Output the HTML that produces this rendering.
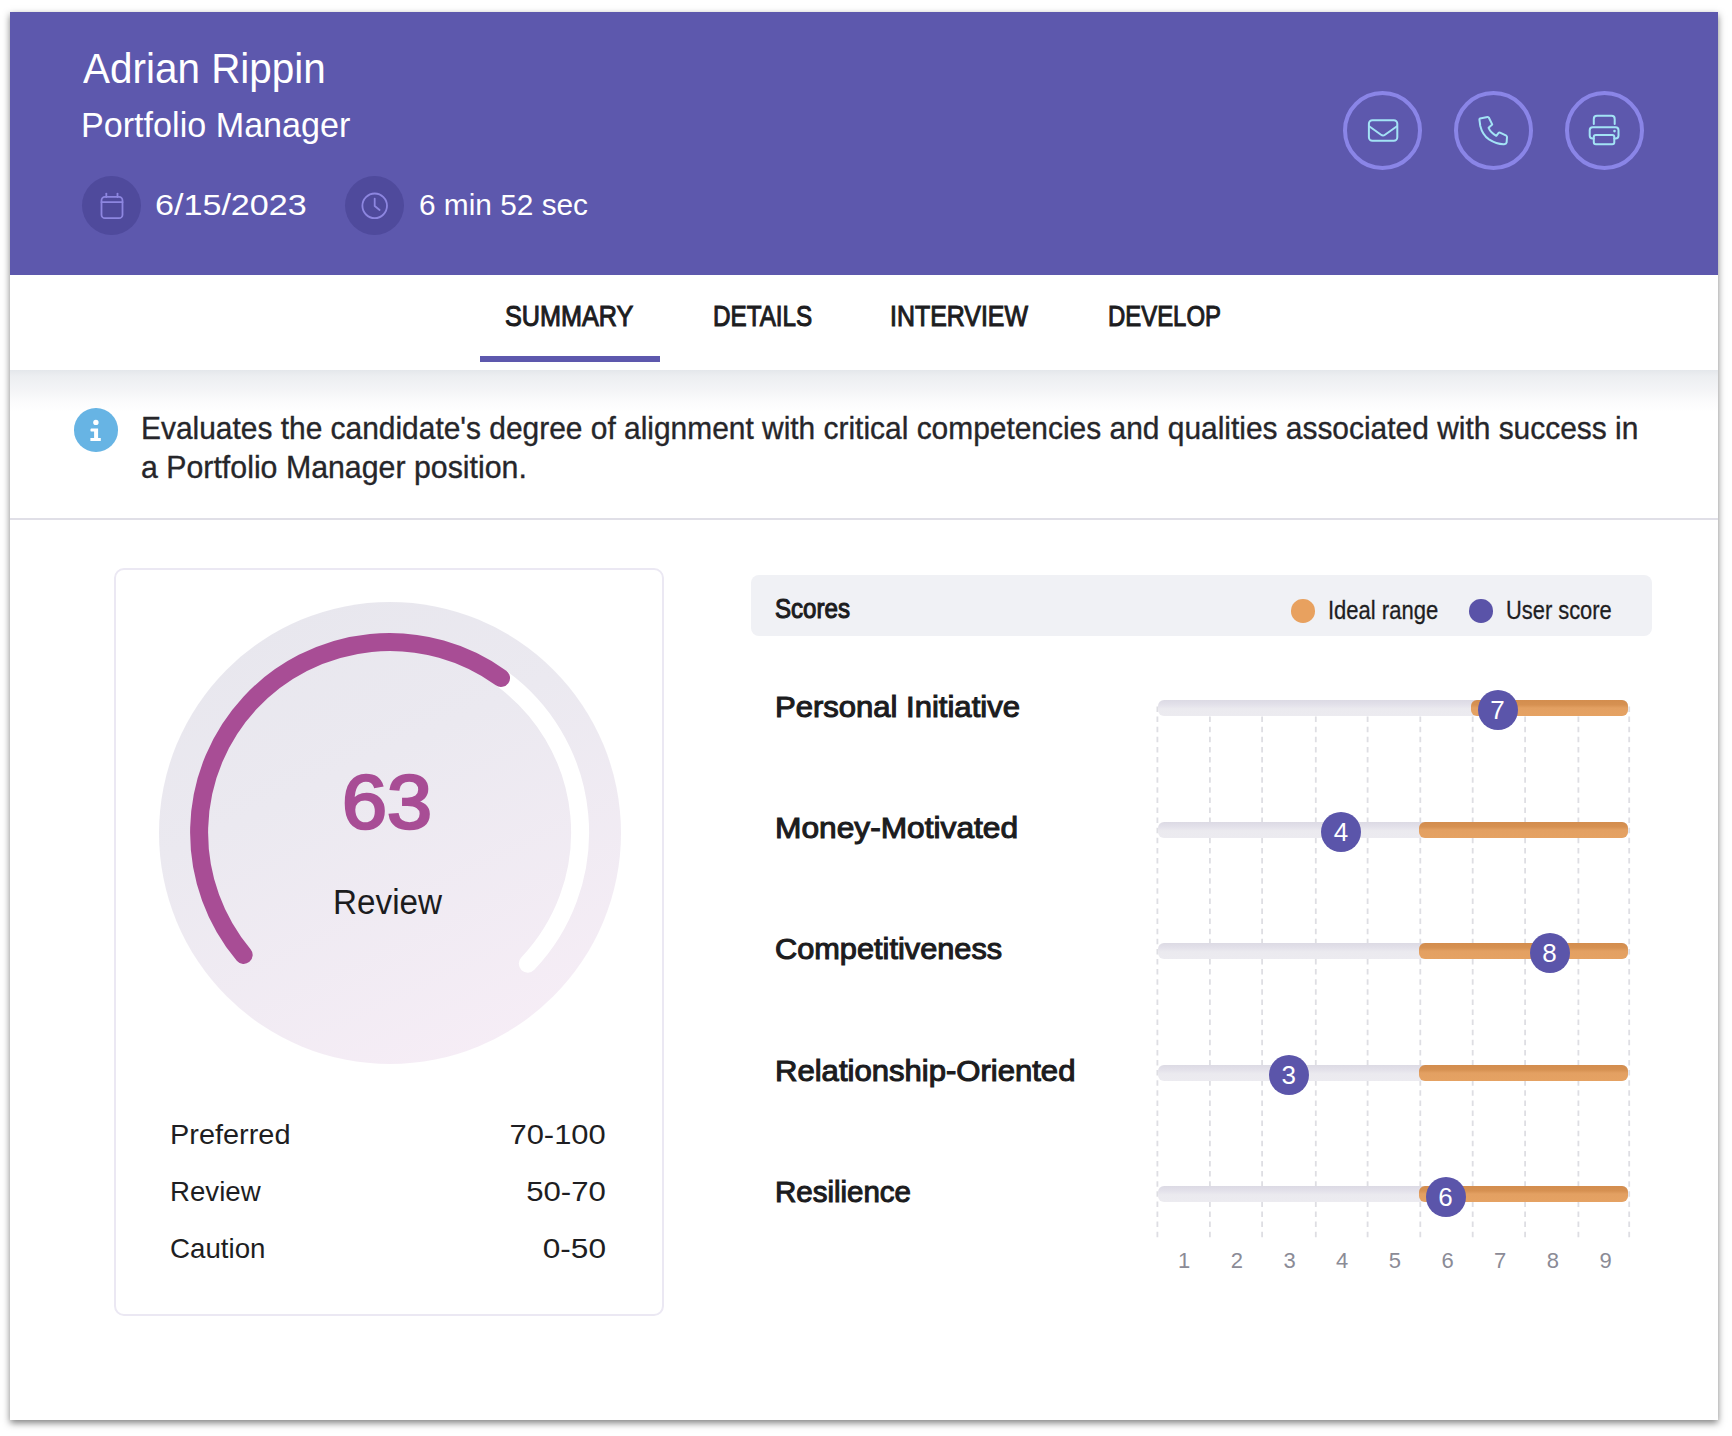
<!DOCTYPE html>
<html><head><meta charset="utf-8">
<style>
html,body{margin:0;padding:0;background:#fff;width:1732px;height:1436px;overflow:hidden;position:relative}
body{font-family:"Liberation Sans",sans-serif;color:#1e1e22}
.a{position:absolute}
.t{position:absolute;white-space:nowrap;line-height:1;transform-origin:0 0}
.card{position:absolute;left:10px;top:12px;width:1708px;height:1408px;background:#fff;box-shadow:0 3px 7px rgba(0,0,0,.5)}
.hdr{position:absolute;left:10px;top:12px;width:1708px;height:263px;background:#5d58ad}
.circ{position:absolute;border-radius:50%}
.ab{position:absolute;width:71px;height:71px;border:4px solid #8a85e7;border-radius:50%}
.tab{font-weight:400;font-size:29.6px;top:300.7px;color:#1d1d1f;-webkit-text-stroke:1.1px #1d1d1f}
.row{font-weight:400;font-size:30.4px;color:#1c1c1e;-webkit-text-stroke:1.1px #1c1c1e}
.trk{position:absolute;left:1158px;width:470px;height:16px;border-radius:6px;background:linear-gradient(#dcdae4 0%,#e3e1ea 30%,#ebeaef 55%,#ecebf0 100%)}
.rng{position:absolute;height:16px;border-radius:6px;background:linear-gradient(#d38d4e 0%,#d69152 30%,#e3a062 50%,#e5a263 100%)}
.mk{position:absolute;width:40px;height:40px;border-radius:50%;background:#5b55aa;color:#fff;font-size:26px;line-height:40px;text-align:center}
.ax{position:absolute;top:1250px;width:40px;text-align:center;font-size:22px;line-height:22px;color:#8b8b96}
.leg{font-size:28.5px;color:#1e1e22}
</style></head><body>
<div class="card"></div>
<div class="hdr"></div>

<div class="t" style="left:83.1px;top:46.5px;font-size:43.4px;color:#fff;transform:scaleX(.932)">Adrian Rippin</div>
<div class="t" style="left:80.8px;top:107px;font-size:35.2px;color:#fff;transform:scaleX(.97)">Portfolio Manager</div>

<div class="circ" style="left:81.8px;top:176px;width:59px;height:59px;background:#4f4a9c"></div>
<div class="t" style="left:155.1px;top:190.8px;font-size:29px;color:#fff;transform:scaleX(1.176)">6/15/2023</div>
<div class="circ" style="left:344.5px;top:176.3px;width:59px;height:59px;background:#4f4a9c"></div>
<div class="t" style="left:418.5px;top:191.1px;font-size:29px;color:#fff;transform:scaleX(1.028)">6 min 52 sec</div>

<div class="ab" style="left:1343px;top:90.8px"></div>
<div class="ab" style="left:1453.5px;top:90.8px"></div>
<div class="ab" style="left:1564.5px;top:90.8px"></div>


<!-- tabs -->
<div class="t tab" style="left:505.4px;transform:scaleX(.852)">SUMMARY</div>
<div class="t tab" style="left:713.3px;transform:scaleX(.819)">DETAILS</div>
<div class="t tab" style="left:890.2px;transform:scaleX(.842)">INTERVIEW</div>
<div class="t tab" style="left:1108.3px;transform:scaleX(.808)">DEVELOP</div>
<div class="a" style="left:480px;top:356px;width:180px;height:6px;background:#5d58ad"></div>
<div class="a" style="left:10px;top:370px;width:1708px;height:42px;background:linear-gradient(#e4e7eb 0%,#eceef1 14%,#f3f4f6 45%,#fbfbfc 75%,#ffffff 100%)"></div>

<!-- info -->
<div class="circ" style="left:74.1px;top:408.4px;width:43.6px;height:43.6px;background:#67b4e4"></div>
<div class="t" style="left:140.5px;top:413.1px;font-size:31.66px;color:#26262a;-webkit-text-stroke:.35px #26262a;transform:scaleX(.945)">Evaluates the candidate's degree of alignment with critical competencies and qualities associated with success in</div>
<div class="t" style="left:140.5px;top:452.1px;font-size:31.66px;color:#26262a;-webkit-text-stroke:.35px #26262a;transform:scaleX(.9575)">a Portfolio Manager position.</div>
<div class="a" style="left:10px;top:518px;width:1708px;height:2px;background:#e0dfe7"></div>

<!-- gauge card -->
<div class="a" style="left:114px;top:568px;width:546px;height:744px;border:2px solid #ebe8f3;border-radius:10px"></div>
<div class="circ" style="left:158.6px;top:601.5px;width:462px;height:462px;background:linear-gradient(155deg,#e8e7ee 10%,#ebe9f0 38%,#f6edf6 90%)"></div>
<div class="circ" style="left:208.1px;top:651px;width:363px;height:363px;background:radial-gradient(circle at 57% 60%,rgba(60,55,100,0) 80%,rgba(60,55,100,.05) 90%,rgba(60,55,100,.11) 100%)"></div>
<svg class="a" style="left:0;top:0" width="1732" height="1436">
<path d="M 501.03 677.99 A 190.5 190.5 0 0 1 527.78 963.63" fill="none" stroke="#ffffff" stroke-width="18" stroke-linecap="round"/>
<path d="M 243.67 954.95 A 190.5 190.5 0 0 1 501.03 677.99" fill="none" stroke="#a84d95" stroke-width="18" stroke-linecap="round"/>
</svg>
<div class="t" style="left:341.9px;top:763.6px;font-size:76px;font-weight:400;color:#a84d95;-webkit-text-stroke:2.6px #a84d95;transform:scaleX(1.064)">63</div>
<div class="t" style="left:332.9px;top:884.9px;font-size:34.4px;color:#1c1c1e;transform:scaleX(.967)">Review</div>

<div class="t leg" style="left:169.7px;top:1119.5px;transform:scaleX(1.014)">Preferred</div>
<div class="t leg" style="left:169.7px;top:1176.8px;transform:scaleX(.97)">Review</div>
<div class="t leg" style="left:169.7px;top:1234.1px;transform:scaleX(.972)">Caution</div>

<!-- scores -->
<div class="a" style="left:751px;top:575px;width:901px;height:61px;border-radius:8px;background:#f0f1f5"></div>
<div class="t" style="left:774.7px;top:594.5px;font-size:27.7px;font-weight:400;-webkit-text-stroke:1.1px #1c1c1e;color:#1c1c1e;transform:scaleX(.87)">Scores</div>
<div class="circ" style="left:1291px;top:599.2px;width:23.6px;height:23.6px;background:#e8a15f"></div>
<div class="t" style="left:1328.2px;top:596.6px;font-size:26.5px;color:#1e1e22;-webkit-text-stroke:.3px #1e1e22;transform:scaleX(.831)">Ideal range</div>
<div class="circ" style="left:1469px;top:599.2px;width:23.6px;height:23.6px;background:#5a53a8"></div>
<div class="t" style="left:1506.4px;top:596.6px;font-size:26.5px;color:#1e1e22;-webkit-text-stroke:.3px #1e1e22;transform:scaleX(.825)">User score</div>

<!-- legend values (right aligned at 605.7) -->
<div class="t leg" style="right:1126.3px;top:1119.5px;transform-origin:100% 0;transform:scaleX(1.085)">70-100</div>
<div class="t leg" style="right:1126.3px;top:1176.8px;transform-origin:100% 0;transform:scaleX(1.094)">50-70</div>
<div class="t leg" style="right:1126.3px;top:1234.1px;transform-origin:100% 0;transform:scaleX(1.11)">0-50</div>

<!-- dashed grid -->
<svg class="a" style="left:0;top:0" width="1732" height="1436"><g stroke="#dedee3" stroke-width="1.8" stroke-dasharray="5.5 4.6" fill="none"><line x1="1157.4" y1="706.5" x2="1157.4" y2="1237.2"/><line x1="1209.9" y1="706.5" x2="1209.9" y2="1237.2"/><line x1="1262.1" y1="706.5" x2="1262.1" y2="1237.2"/><line x1="1315.8" y1="706.5" x2="1315.8" y2="1237.2"/><line x1="1367.6" y1="706.5" x2="1367.6" y2="1237.2"/><line x1="1420.3" y1="706.5" x2="1420.3" y2="1237.2"/><line x1="1472.7" y1="706.5" x2="1472.7" y2="1237.2"/><line x1="1525.1" y1="706.5" x2="1525.1" y2="1237.2"/><line x1="1578.4" y1="706.5" x2="1578.4" y2="1237.2"/><line x1="1629.2" y1="706.5" x2="1629.2" y2="1237.2"/></g></svg>

<!-- row labels -->
<div class="t row" style="left:774.6px;top:690.6px;transform:scaleX(1.021)">Personal Initiative</div>
<div class="t row" style="left:774.6px;top:811.9px;transform:scaleX(1.043)">Money-Motivated</div>
<div class="t row" style="left:774.6px;top:933px;transform:scaleX(1.011)">Competitiveness</div>
<div class="t row" style="left:774.6px;top:1054.8px;transform:scaleX(1.022)">Relationship-Oriented</div>
<div class="t row" style="left:774.6px;top:1176.4px;transform:scaleX(.97)">Resilience</div>

<!-- tracks -->
<div class="trk" style="top:700px"></div>
<div class="rng" style="left:1470.5px;width:157.5px;top:700px"></div>
<div class="mk" style="left:1477.5px;top:690px">7</div>

<div class="trk" style="top:821.5px"></div>
<div class="rng" style="left:1419.3px;width:208.7px;top:821.5px"></div>
<div class="mk" style="left:1321.0px;top:811.5px">4</div>

<div class="trk" style="top:943px"></div>
<div class="rng" style="left:1419.3px;width:208.7px;top:943px"></div>
<div class="mk" style="left:1529.5px;top:933px">8</div>

<div class="trk" style="top:1064.5px"></div>
<div class="rng" style="left:1419.3px;width:208.7px;top:1064.5px"></div>
<div class="mk" style="left:1268.7px;top:1055px">3</div>

<div class="trk" style="top:1186px"></div>
<div class="rng" style="left:1419.3px;width:208.7px;top:1186px"></div>
<div class="mk" style="left:1425.5px;top:1176.5px">6</div>

<!-- axis -->
<div class="ax" style="left:1164.1px">1</div>
<div class="ax" style="left:1216.8px">2</div>
<div class="ax" style="left:1269.5px">3</div>
<div class="ax" style="left:1322.2px">4</div>
<div class="ax" style="left:1374.9px">5</div>
<div class="ax" style="left:1427.5px">6</div>
<div class="ax" style="left:1480.2px">7</div>
<div class="ax" style="left:1532.9px">8</div>
<div class="ax" style="left:1585.6px">9</div>


<svg class="a" style="left:0;top:0" width="1732" height="600">
<g fill="none" stroke="#8d86e0" stroke-width="1.8" stroke-linecap="round" stroke-linejoin="round">
<rect x="101.5" y="196.9" width="21" height="21.3" rx="3.5"/>
<line x1="101.5" y1="202.2" x2="122.5" y2="202.2"/>
<line x1="106.3" y1="193.6" x2="106.3" y2="197"/>
<line x1="117.5" y1="193.6" x2="117.5" y2="197"/>
<circle cx="374.7" cy="205.8" r="12.3"/>
<path d="M374.7 198.6 V206 L379.6 210"/>
</g>
<g fill="none" stroke="#a3e3f5" stroke-width="2" stroke-linecap="round" stroke-linejoin="round">
<rect x="1368.9" y="120.3" width="28.4" height="20.5" rx="3.5"/>
<path d="M1369.5 126.5 L1381 134.8 Q1383 136.2 1385 134.8 L1397 126.2"/>
<path d="M1480 118.4 L1487.6 116.9 Q1488.6 116.9 1488.9 117.8 L1492.2 124.4 L1488.6 127.8 Q1490.5 132.4 1496.3 135.8 L1498.8 132.6 Q1499.4 132.4 1500 132.6 L1506.3 135.7 Q1507 136.2 1507 137 L1506.6 142.6 Q1506.2 144.1 1504.2 144.2 Q1497 144.5 1489 139.4 Q1482.5 135 1480.3 126 L1479.4 119.5 Q1479.4 118.6 1480 118.4 Z"/>
<path d="M1593.8 124 V119 Q1593.8 115.8 1597 115.8 H1611.5 Q1614.7 115.8 1614.7 119 V124"/>
<path d="M1593.8 138.6 H1592.7 Q1589.7 138.6 1589.7 135.6 V130.3 Q1589.7 127.2 1592.7 127.2 H1615.5 Q1618.5 127.2 1618.5 130.3 V135.6 Q1618.5 138.6 1615.5 138.6 H1614.3"/>
<rect x="1593.8" y="134.9" width="20.5" height="9.3" rx="2"/>
<circle cx="1614.5" cy="131.1" r="1.3" fill="#a3e3f5" stroke="none"/>
</g>
<g fill="#ffffff">
<circle cx="95.9" cy="422.4" r="2.7"/>
<path d="M91.2 428.4 H98.1 V438.1 H100.8 V441.1 H90.4 V438.1 H94.1 V431.4 H91.2 Q90.4 431.4 90.4 429.9 Q90.4 428.4 91.2 428.4 Z"/>
</g>
</svg>
</body></html>
